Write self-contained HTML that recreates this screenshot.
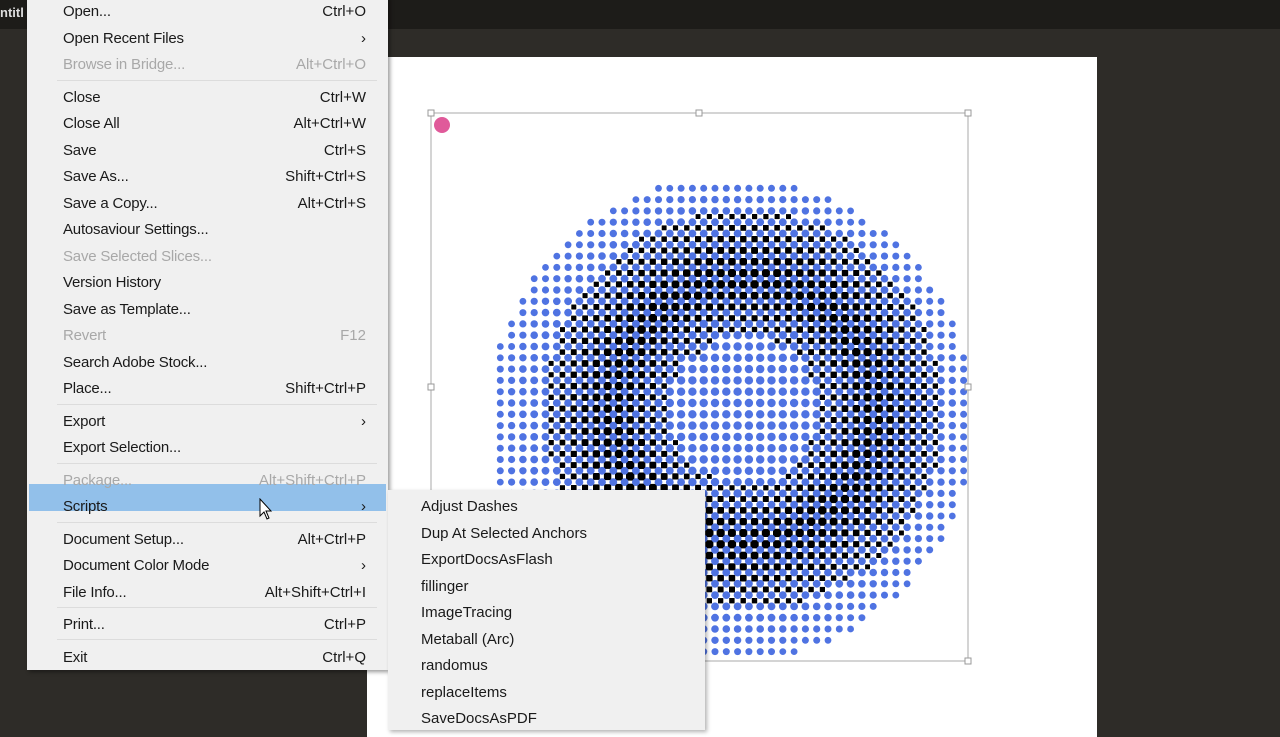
<!DOCTYPE html>
<html><head><meta charset="utf-8"><style>
body{margin:0;width:1280px;height:720px;overflow:hidden;background:#2e2c28;font-family:"Liberation Sans",sans-serif;position:relative}
.top{position:absolute;left:0;top:0;width:1280px;height:29px;background:#1d1c19}
.tab{position:absolute;left:0;top:5px;color:#ddd;font-size:13px;font-weight:bold}
.canvas{position:absolute;left:367px;top:57px;width:730px;height:680px;background:#fff}
.menu{position:absolute;left:27px;top:-5px;width:361px;height:675px;background:#f0f0f0;box-shadow:2px 2px 4px rgba(0,0,0,.4)}
.sub{position:absolute;left:388px;top:490px;width:317px;height:240px;background:#f0f0f0;box-shadow:2px 2px 4px rgba(0,0,0,.3)}
.i{position:absolute;left:36px;font-size:15px;color:#1a1a1a;line-height:18px;letter-spacing:-.2px;margin-top:2px}
.s{position:absolute;right:22px;font-size:15px;color:#1a1a1a;line-height:18px;margin-top:2px}
.d{color:#a8a8a8}
.sep{position:absolute;left:30px;width:320px;height:1px;background:#dcdcdc}
.hl{position:absolute;left:2px;top:489px;width:357px;height:27px;background:#92c0ea}
.j{position:absolute;left:33px;font-size:15px;color:#1a1a1a;line-height:18px;margin-top:2px}
</style></head><body>
<div class="top"><span class="tab">ntitl</span></div>
<div class="canvas"></div>
<svg id="ht" style="position:absolute;left:0;top:0" width="1280" height="720"></svg>
<div class="menu">
<div class="hl"></div>
<div class="i" style="top:6px">Open...</div><div class="s" style="top:6px">Ctrl+O</div>
<div class="i" style="top:33px">Open Recent Files</div><div class="s" style="top:33px">›</div>
<div class="i d" style="top:59px">Browse in Bridge...</div><div class="s d" style="top:59px">Alt+Ctrl+O</div>
<div class="sep" style="top:85px"></div>
<div class="i" style="top:92px">Close</div><div class="s" style="top:92px">Ctrl+W</div>
<div class="i" style="top:118px">Close All</div><div class="s" style="top:118px">Alt+Ctrl+W</div>
<div class="i" style="top:145px">Save</div><div class="s" style="top:145px">Ctrl+S</div>
<div class="i" style="top:171px">Save As...</div><div class="s" style="top:171px">Shift+Ctrl+S</div>
<div class="i" style="top:198px">Save a Copy...</div><div class="s" style="top:198px">Alt+Ctrl+S</div>
<div class="i" style="top:224px">Autosaviour Settings...</div>
<div class="i d" style="top:251px">Save Selected Slices...</div>
<div class="i" style="top:277px">Version History</div>
<div class="i" style="top:304px">Save as Template...</div>
<div class="i d" style="top:330px">Revert</div><div class="s d" style="top:330px">F12</div>
<div class="i" style="top:357px">Search Adobe Stock...</div>
<div class="i" style="top:383px">Place...</div><div class="s" style="top:383px">Shift+Ctrl+P</div>
<div class="sep" style="top:409px"></div>
<div class="i" style="top:416px">Export</div><div class="s" style="top:416px">›</div>
<div class="i" style="top:442px">Export Selection...</div>
<div class="sep" style="top:468px"></div>
<div class="i d" style="top:475px">Package...</div><div class="s d" style="top:475px">Alt+Shift+Ctrl+P</div>
<div class="i" style="top:501px">Scripts</div><div class="s" style="top:501px">›</div>
<div class="sep" style="top:527px"></div>
<div class="i" style="top:534px">Document Setup...</div><div class="s" style="top:534px">Alt+Ctrl+P</div>
<div class="i" style="top:560px">Document Color Mode</div><div class="s" style="top:560px">›</div>
<div class="i" style="top:587px">File Info...</div><div class="s" style="top:587px">Alt+Shift+Ctrl+I</div>
<div class="sep" style="top:612px"></div>
<div class="i" style="top:619px">Print...</div><div class="s" style="top:619px">Ctrl+P</div>
<div class="sep" style="top:644px"></div>
<div class="i" style="top:652px">Exit</div><div class="s" style="top:652px">Ctrl+Q</div>
</div>
<div class="sub">
<div class="j" style="top:6px">Adjust Dashes</div>
<div class="j" style="top:33px">Dup At Selected Anchors</div>
<div class="j" style="top:59px">ExportDocsAsFlash</div>
<div class="j" style="top:86px">fillinger</div>
<div class="j" style="top:112px">ImageTracing</div>
<div class="j" style="top:139px">Metaball (Arc)</div>
<div class="j" style="top:165px">randomus</div>
<div class="j" style="top:192px">replaceItems</div>
<div class="j" style="top:218px">SaveDocsAsPDF</div>
</div>
<svg style="position:absolute;left:258px;top:498px" width="16" height="24"><path d="M2 1 L2 18 L6 14 L9 21 L11 20 L8 13 L13 13 Z" fill="#fff" stroke="#000" stroke-width="1"/></svg>
<script>
var s=document.getElementById('ht'),h='';
var cx=731,cy=419,R=242,sp=11.3;
h+='<rect x="431" y="113" width="537" height="548" fill="none" stroke="#aaa" stroke-width="1"/>';
for(var y=cy-R;y<=cy+R;y+=sp){for(var x=cx-R;x<=cx+R;x+=sp){var dx=x-cx,dy=y-cy,r=Math.sqrt(dx*dx+dy*dy);if(r>R)continue;
var ld=Math.sqrt((x-738)*(x-738)+(y-405)*(y-405));
var dark;if(ld<50)dark=0;else if(ld<130)dark=(ld-50)/80;else dark=Math.max(0,1-(ld-130)/100);
var edge=Math.min(1,(R-r)/40);
if(dark>0.3&&x+sp/2<cx+R&&y+sp/2<cy+R){var q=sp*(0.3+0.45*dark);h+='<rect x="'+(x+sp/2-q/2).toFixed(1)+'" y="'+(y+sp/2-q/2).toFixed(1)+'" width="'+q.toFixed(1)+'" height="'+q.toFixed(1)+'" fill="#000"/>';}
var rr=3.4+0.5*edge;if(ld<90)rr=4.2;
h+='<circle cx="'+x.toFixed(1)+'" cy="'+y.toFixed(1)+'" r="'+rr.toFixed(1)+'" fill="#4f73e2"/>';}}
h+='<circle cx="442" cy="125" r="8" fill="#e05a9a"/>';
[[431,113],[699,113],[968,113],[431,387],[968,387],[431,661],[699,661],[968,661]].forEach(function(p){h+='<rect x="'+(p[0]-3)+'" y="'+(p[1]-3)+'" width="6" height="6" fill="#fff" stroke="#999"/>';});
s.innerHTML=h;
</script>
</body></html>
